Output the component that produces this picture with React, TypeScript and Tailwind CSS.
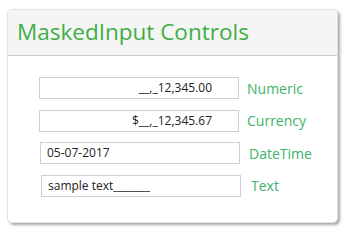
import React from "react";

const font = { fontFamily: '"Open Sans", "Noto Sans", sans-serif' };

function Row({
  value,
  label,
  align,
  ml,
  gap,
}: {
  value: string;
  label: string;
  align: "right" | "left";
  ml: string;
  gap: string;
}) {
  return (
    <div className={`flex items-center ${ml}`}>
      <div
        className={`flex h-[22px] w-[200px] items-center border border-[#cfcfcf] bg-white text-[12px] text-[#222] ${
          align === "right" ? "justify-end pr-[26px]" : "justify-start pl-[6px]"
        }`}
      >
        {value}
      </div>
      <div className={`${gap} text-[14px] text-[#3cb36a]`}>{label}</div>
    </div>
  );
}

export default function App() {
  return (
    <div className="h-[233px] w-[347px] bg-white pl-[7px] pt-[9px]" style={font}>
      <div className="h-[214px] w-[331px] overflow-hidden rounded-[5px] border border-[#e2e2e2] bg-white shadow-[2px_2px_3px_rgba(0,0,0,0.35)]">
        <div className="flex h-[46px] items-center border-b border-[#cccccc] bg-[#f5f5f5] pl-[9px]">
          <span className="text-[22.5px] leading-none text-[#3fae45]">MaskedInput Controls</span>
        </div>
        <div className="flex flex-col gap-[10.6px] pt-[21px]">
          <Row value="__,_12,345.00" label="Numeric" align="right" ml="ml-[31px]" gap="ml-[8px]" />
          <Row value="$__,_12,345.67" label="Currency" align="right" ml="ml-[31px]" gap="ml-[8px]" />
          <Row value="05-07-2017" label="DateTime" align="left" ml="ml-[32px]" gap="ml-[9px]" />
          <Row value="sample text_______" label="Text" align="left" ml="ml-[33px]" gap="ml-[10px]" />
        </div>
      </div>
    </div>
  );
}
